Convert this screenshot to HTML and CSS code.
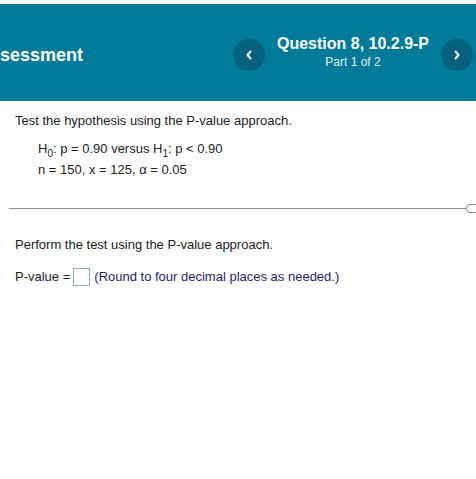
FILE: index.html
```html
<!DOCTYPE html>
<html lang="en">
<head>
<meta charset="utf-8">
<title>Question 8, 10.2.9-P</title>
<link rel="stylesheet" href="styles.css">
</head>
<body>
<header class="topbar">
  <div class="brand">sessment</div>
  <div class="qnav">
    <button class="navbtn" aria-label="Previous question">
      <svg width="8" height="10" viewBox="0 0 8 10"><path d="M5.5 1.5 L2.5 5 L5.5 8.5" fill="none" stroke="#fff" stroke-width="2" stroke-linecap="round" stroke-linejoin="round"/></svg>
    </button>
    <div class="qtitle">
      <div class="qname">Question 8, 10.2.9-P</div>
      <div class="qpart">Part 1 of 2</div>
    </div>
    <button class="navbtn" aria-label="Next question">
      <svg width="8" height="10" viewBox="0 0 8 10"><path d="M2.5 1.5 L5.5 5 L2.5 8.5" fill="none" stroke="#fff" stroke-width="2" stroke-linecap="round" stroke-linejoin="round"/></svg>
    </button>
  </div>
</header>

<main class="content">
  <p class="intro">Test the hypothesis using the P-value approach.</p>
  <div class="given">
    <div class="gline">H<sub>0</sub>: p = 0.90 versus H<sub>1</sub>: p &lt; 0.90</div>
    <div class="gline">n = 150, x = 125, α = 0.05</div>
  </div>
</main>

<div class="divider"><span class="rule"></span><span class="handle"></span></div>

<section class="part">
  <p class="task">Perform the test using the P-value approach.</p>
  <p class="answer"><span>P-value =</span><span class="box"></span><span class="hint">(Round to four decimal places as needed.)</span></p>
</section>
</body>
</html>
```

FILE: styles.css
```css
html, body {
  margin: 0;
  padding: 0;
  background: #ffffff;
  overflow: hidden;
}
body {
  font-family: "Liberation Sans", Arial, sans-serif;
  color: #222222;
  font-size: 13px;
}
.topbar {
  margin-top: 4px;
  height: 97px;
  background: #007a99;
  display: flex;
  align-items: center;
  padding-top: 4px;
  box-sizing: border-box;
  color: #ffffff;
}
.brand {
  flex: 1;
  font-size: 18px;
  font-weight: bold;
  line-height: 22px;
  white-space: nowrap;
}
.qnav {
  display: flex;
  align-items: center;
  padding-right: 3px;
}
.navbtn {
  width: 32px;
  height: 32px;
  border-radius: 50%;
  border: none;
  padding: 0;
  margin: 0;
  background: #05627f;
  display: flex;
  align-items: center;
  justify-content: center;
}
.qtitle {
  width: 176px;
  text-align: center;
  display: flex;
  flex-direction: column;
  gap: 2px;
  margin-top: -6px;
}
.qname {
  font-size: 16px;
  font-weight: bold;
  line-height: 18px;
}
.qpart {
  font-size: 12px;
  line-height: 14px;
  color: #e6f3f7;
}
.content {
  padding-left: 15px;
}
.intro {
  margin: 12px 0 0;
  line-height: 15px;
}
.given {
  margin: 10px 0 0 23px;
}
.gline {
  line-height: 21px;
}
sub {
  font-size: 10px;
  line-height: 0;
  vertical-align: -4px;
}
.divider {
  display: flex;
  align-items: center;
  margin: 24px 0 0 9px;
  height: 9px;
}
.rule {
  flex: 1;
  height: 1px;
  background: #8c8c8c;
}
.handle {
  width: 10px;
  height: 9px;
  box-sizing: border-box;
  border: 1px solid #8c8c8c;
  border-right: none;
  border-radius: 5px 0 0 5px;
  background: #ffffff;
}
.part {
  padding-left: 15px;
}
.task {
  margin: 24px 0 0;
  line-height: 15px;
}
.answer {
  margin: 15px 0 0;
  line-height: 20px;
}
.box {
  display: inline-block;
  width: 17px;
  height: 18px;
  box-sizing: border-box;
  border: 1px solid #90a6bd;
  margin: 0 4px 0 3px;
  vertical-align: -5px;
  background: #ffffff;
}
.hint {
  color: #1e1e6e;
}
```
